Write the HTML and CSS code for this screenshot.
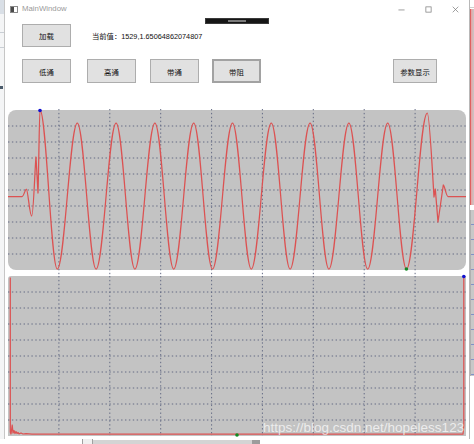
FILE: index.html
```html
<!DOCTYPE html>
<html>
<head>
<meta charset="utf-8">
<link rel="stylesheet" href="styles.css">
</head>
<body>
<div class="screen">
  <div class="main">
    <div class="side-left">
      <div class="sl-top"></div>
      <div class="sl-line"></div>
      <div class="sl-line sl-line2"></div>
      <div class="sl-mark"></div>
    </div>
    <div class="window">
      <div class="titlebar">
        <svg class="app-icon" viewBox="0 0 8 7"><rect x="0.5" y="0.5" width="7" height="6" fill="#fff" stroke="#8a8a8a"/><rect x="1" y="1" width="3" height="5" fill="#4a4a4a"/></svg>
        <span class="title">MainWindow</span>
        <div class="controls">
          <span class="ctl"><svg viewBox="0 0 8 8"><line x1="0.5" y1="4.5" x2="7.5" y2="4.5" stroke="#777" stroke-width="0.8"/></svg></span>
          <span class="ctl"><svg viewBox="0 0 8 8"><rect x="1" y="1" width="6" height="6" fill="none" stroke="#777" stroke-width="0.8"/></svg></span>
          <span class="ctl"><svg viewBox="0 0 8 8"><path d="M0.8 0.8 L7.2 7.2 M7.2 0.8 L0.8 7.2" stroke="#777" stroke-width="0.8"/></svg></span>
        </div>
      </div>
      <div class="row row1">
        <div class="btn">加载</div>
        <span class="value">当前值：1529,1.65064862074807</span>
      </div>
      <div class="row row2">
        <div class="btn">低通</div>
        <div class="btn b2">高通</div>
        <div class="btn b3">带通</div>
        <div class="btn b4 focused">带阻</div>
        <div class="btn wide">参数显示</div>
      </div>
      <div class="chart chart1">
        <svg class="plot" viewBox="0 0 458 160" width="458" height="160">
          <g class="gridv">
            <line x1="50.9" y1="-1" x2="50.9" y2="166"/>
            <line x1="101.8" y1="-1" x2="101.8" y2="166"/>
            <line x1="152.7" y1="-1" x2="152.7" y2="166"/>
            <line x1="203.6" y1="-1" x2="203.6" y2="166"/>
            <line x1="254.4" y1="-1" x2="254.4" y2="166"/>
            <line x1="305.3" y1="-1" x2="305.3" y2="166"/>
            <line x1="356.2" y1="-1" x2="356.2" y2="166"/>
            <line x1="407.1" y1="-1" x2="407.1" y2="166"/>
          </g>
          <g class="gridh">
            <line x1="0" y1="16" x2="458" y2="16"/>
            <line x1="0" y1="32" x2="458" y2="32"/>
            <line x1="0" y1="48" x2="458" y2="48"/>
            <line x1="0" y1="64" x2="458" y2="64"/>
            <line x1="0" y1="80" x2="458" y2="80"/>
            <line x1="0" y1="96" x2="458" y2="96"/>
            <line x1="0" y1="112" x2="458" y2="112"/>
            <line x1="0" y1="128" x2="458" y2="128"/>
            <line x1="0" y1="144" x2="458" y2="144"/>
          </g>
          <path class="wave" d="M0,86.5 L14,86.5 C16,86.5 17,79 18.3,79 C20,79 21.5,106 23.7,106 C25.5,106 27,55 28,47 L30,83 C30.8,60 31.3,0 32,0
            C38.3,0 43,159 49.3,159
            C56.58,159 62.02,13 69.3,13
            C76.14,13 81.26,159 88.1,159
            C95.38,159 100.82,13 108.1,13
            C114.94,13 120.06,159 126.9,159
            C134.18,159 139.62,13 146.9,13
            C153.74,13 158.86,159 165.7,159
            C172.98,159 178.42,13 185.7,13
            C192.54,13 197.66,159 204.5,159
            C211.78,159 217.22,13 224.5,13
            C231.34,13 236.46,159 243.3,159
            C250.58,159 256.02,13 263.3,13
            C270.14,13 275.26,159 282.1,159
            C289.38,159 294.82,13 302.1,13
            C308.94,13 314.06,159 320.9,159
            C328.18,159 333.62,13 340.9,13
            C347.74,13 352.86,159 359.7,159
            C366.98,159 372.42,13 379.7,13
            C386.54,13 391.66,159 398.5,159
            C406.07,159 411.73,3 419.3,3
            C421.5,3 424,55 426,87
            L427.3,79 L430,112 L435.3,75 C437,76 438,86.5 440,86.5 L458,86.5"/>
          <circle cx="32" cy="0.5" r="1.8" fill="#1010d0"/>
          <circle cx="398.4" cy="159" r="1.8" fill="#118a22"/>
        </svg>
      </div>
      <div class="chart chart2">
        <svg class="plot" viewBox="0 0 458 160" width="458" height="160">
          <g class="gridv">
            <line x1="50.9" y1="0" x2="50.9" y2="160"/>
            <line x1="101.8" y1="0" x2="101.8" y2="160"/>
            <line x1="152.7" y1="0" x2="152.7" y2="160"/>
            <line x1="203.6" y1="0" x2="203.6" y2="160"/>
            <line x1="254.4" y1="0" x2="254.4" y2="160"/>
            <line x1="305.3" y1="0" x2="305.3" y2="160"/>
            <line x1="356.2" y1="0" x2="356.2" y2="160"/>
            <line x1="407.1" y1="0" x2="407.1" y2="160"/>
          </g>
          <g class="gridh">
            <line x1="0" y1="16" x2="458" y2="16"/>
            <line x1="0" y1="32" x2="458" y2="32"/>
            <line x1="0" y1="48" x2="458" y2="48"/>
            <line x1="0" y1="64" x2="458" y2="64"/>
            <line x1="0" y1="80" x2="458" y2="80"/>
            <line x1="0" y1="96" x2="458" y2="96"/>
            <line x1="0" y1="112" x2="458" y2="112"/>
            <line x1="0" y1="128" x2="458" y2="128"/>
            <line x1="0" y1="144" x2="458" y2="144"/>
          </g>
          <path class="wave" d="M2.3,1.5 L2.3,156 L3,158 L4.2,149 L5,157 L6,154.5 L7,157.5 L8,155.5 L9,157.5 L10,156.5 L11,157.8 L13,157 L15,158 L18,157.6 L24,158.2 L455,158.2 L455.8,150 L455.8,0.5"/>
          <circle cx="455.8" cy="0.5" r="1.8" fill="#1010d0"/>
          <circle cx="229" cy="159" r="1.8" fill="#118a22"/>
        </svg>
        <span class="watermark">https://blog.csdn.net/hopeless123</span>
      </div>
      <div class="devbar"><span></span></div>
    </div>
    <div class="side-right">
      <div class="sr-top"></div>
      <div class="sr-panel sr-panel1"></div>
      <div class="sr-panel sr-panel2"></div>
    </div>
  </div>
  <div class="bottom-strip">
    <div class="bs-icon"></div>
    <div class="bs-bar"></div>
    <div class="bs-knob"></div>
  </div>
</div>
</body>
</html>
```

FILE: styles.css
```css
* { box-sizing: border-box; }
html, body { margin: 0; padding: 0; }
body {
  width: 474px;
  height: 444px;
  overflow: hidden;
  background: #ffffff;
  font-family: "Liberation Sans", "Noto Sans CJK SC", sans-serif;
}
.screen {
  width: 474px;
  height: 444px;
  display: flex;
  flex-direction: column;
}
.main {
  height: 439px;
  display: flex;
}
.side-left {
  width: 4px;
  background: #f4f5f6;
  display: flex;
  flex-direction: column;
}
.sl-top { height: 14px; background: #d9dfe6; }
.sl-line { height: 1px; margin-top: 18px; background: #c9ced4; }
.sl-line2 { margin-top: 14px; }
.sl-mark { height: 3px; width: 3px; margin-top: 38px; background: #4a5a6a; }
.window {
  position: relative;
  width: 466px;
  border-left: 1px solid #c6c6c6;
  border-right: 1px solid #b8b8b8;
  background: #ffffff;
  display: flex;
  flex-direction: column;
}
.titlebar {
  height: 18px;
  display: flex;
  align-items: center;
  padding-left: 5px;
}
.app-icon { width: 8px; height: 7px; margin-top: 1px; }
.title {
  margin-left: 4px;
  font-size: 7.8px;
  color: #9a9a9a;
  line-height: 1;
}
.controls { margin-left: auto; display: flex; height: 18px; }
.ctl {
  width: 27px;
  height: 18px;
  display: flex;
  align-items: center;
  justify-content: center;
}
.ctl svg { width: 7px; height: 7px; }
.row {
  display: flex;
  align-items: center;
  padding-left: 17px;
}
.row1 { margin-top: 6px; height: 23px; }
.row2 { margin-top: 12px; height: 24px; }
.btn {
  width: 49px;
  height: 100%;
  background: #e1e1e1;
  border: 1px solid #adadad;
  display: flex;
  align-items: center;
  justify-content: center;
  font-size: 7.4px;
  color: #111111;
  font-family: "Noto Sans CJK SC", sans-serif;
}
.b2 { margin-left: 16px; }
.b3 { margin-left: 14px; }
.b4 { margin-left: 13px; }
.focused { border: 2px solid #a2a2a2; }
.wide { width: 44px; margin-left: 132px; }
.value {
  margin-left: 21px;
  font-size: 7.3px;
  color: #111111;
  font-family: "Liberation Sans", "Noto Sans CJK SC", sans-serif;
  margin-top: 1px;
}
.chart {
  position: relative;
  width: 458px;
  height: 160px;
  margin-left: 3px;
  background: #c3c3c3;
}
.chart1 { margin-top: 27px; border-radius: 8px; }
.chart2 { margin-top: 6px; border-radius: 3px 0 0 0; }
.plot { display: block; overflow: visible; }
.gridv line, .gridh line {
  stroke: #646b84;
  stroke-width: 1;
  stroke-dasharray: 1.4 2.5;
}
.wave {
  fill: none;
  stroke: #dc5252;
  stroke-width: 1.25;
  stroke-linejoin: round;
}
.watermark {
  position: absolute;
  left: 255px;
  top: 144px;
  font-family: "Liberation Sans", sans-serif;
  font-size: 13.5px;
  line-height: 16px;
  color: rgba(255, 255, 255, 0.7);
  white-space: nowrap;
}
.devbar {
  position: absolute;
  left: 200px;
  top: 18px;
  width: 64px;
  height: 6px;
  background: #161616;
  border: 1px solid #3a3a3a;
  display: flex;
  align-items: center;
  justify-content: center;
}
.devbar span {
  width: 18px;
  height: 1.5px;
  background: #7a7a7a;
}
.side-right {
  width: 4px;
  display: flex;
  flex-direction: column;
  background: #ffffff;
}
.sr-top { height: 8px; border-bottom: 1px solid #cfcfcf; }
.sr-panel { background: #c6c6c6; border-left: 1px solid #e06060; }
.sr-panel1 { height: 196px; margin-top: 1px; background: linear-gradient(90deg, #e8a0a0, #c8c8c8); }
.sr-panel2 { height: 166px; margin-top: 5px; border-left: 1px solid #b0b0b0; background: repeating-linear-gradient(180deg, #c8c8c8 0, #c8c8c8 14px, #8090c8 14px, #8090c8 15px); }
.bottom-strip {
  height: 5px;
  display: flex;
  align-items: flex-end;
  background: #ffffff;
}
.bs-icon {
  width: 11px;
  height: 5px;
  margin-left: 82px;
  border-left: 1px solid #a0a0a0;
  border-right: 1px solid #a0a0a0;
  background: #f0f0f0;
}
.bs-bar { width: 159px; height: 4px; background: #d4d4d4; }
.bs-knob { width: 8px; height: 4px; background: #9c9c9c; }
```
